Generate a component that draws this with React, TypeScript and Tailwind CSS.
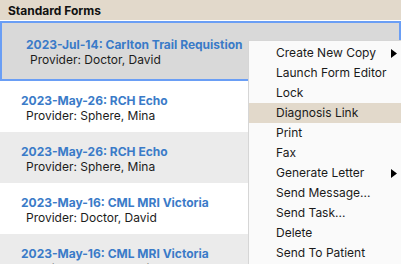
import React from 'react';

type Form = { title: string; provider: string };

const forms: Form[] = [
  { title: '2023-Jul-14: Carlton Trail Requistion', provider: 'Doctor, David' },
  { title: '2023-May-26: RCH Echo', provider: 'Sphere, Mina' },
  { title: '2023-May-26: RCH Echo', provider: 'Sphere, Mina' },
  { title: '2023-May-16: CML MRI Victoria', provider: 'Doctor, David' },
  { title: '2023-May-16: CML MRI Victoria', provider: 'Doctor, David' },
];

const menuItems: { label: string; sub?: boolean; active?: boolean }[] = [
  { label: 'Create New Copy', sub: true },
  { label: 'Launch Form Editor' },
  { label: 'Lock' },
  { label: 'Diagnosis Link', active: true },
  { label: 'Print' },
  { label: 'Fax' },
  { label: 'Generate Letter', sub: true },
  { label: 'Send Message...' },
  { label: 'Send Task...' },
  { label: 'Delete' },
  { label: 'Send To Patient' },
];

function Arrow() {
  return (
    <svg width="6" height="9" viewBox="0 0 6 9" className="absolute left-[142px] top-[6px]">
      <path d="M0 0 L6 4.5 L0 9 Z" fill="#000" />
    </svg>
  );
}

export default function App() {
  return (
    <div
      className="relative w-[401px] h-[264px] overflow-hidden bg-white"
      style={{ fontFamily: 'Inter, "Noto Sans", sans-serif' }}
    >
      <div className="h-[21px] bg-[#e2d9cb] border-b border-white px-[8px] text-[12px] font-bold leading-[21px] text-[#111]">
        Standard Forms
      </div>

      <div className="flex flex-col">
        {forms.map((f, i) => {
          if (i === 0) {
            return (
              <div key={i} className="h-[60px] border-2 border-[#6a9ef5] bg-[#d9d9d9] pl-[24px] pt-[14px]">
                <div className="text-[12px] font-bold leading-[15px] text-[#3a7bc8]">{f.title}</div>
                <div className="ml-[4px] text-[12px] leading-[15px] text-[#1c1c1c]">Provider: {f.provider}</div>
              </div>
            );
          }
          return (
            <div
              key={i}
              className={`h-[51px] pl-[21px] pt-[12px] ${i % 2 === 0 ? 'bg-[#ebebeb]' : 'bg-white'}`}
            >
              <div className="text-[12px] font-bold leading-[15px] text-[#3a7bc8]">{f.title}</div>
              <div className="ml-[5px] text-[12px] leading-[15px] text-[#1c1c1c]">Provider: {f.provider}</div>
            </div>
          );
        })}
      </div>

      <div className="absolute left-[248px] top-[40px] w-[170px] h-[240px] bg-[#fafafa] border border-[#d6d6d6] pt-[2px]">
        {menuItems.map((m) => (
          <div
            key={m.label}
            className={`relative h-[20px] pl-[27px] text-[12px] leading-[20px] text-[#1a1a1a] ${m.active ? 'bg-[#e2d9cb]' : ''}`}
          >
            {m.label}
            {m.sub && <Arrow />}
          </div>
        ))}
      </div>
    </div>
  );
}
